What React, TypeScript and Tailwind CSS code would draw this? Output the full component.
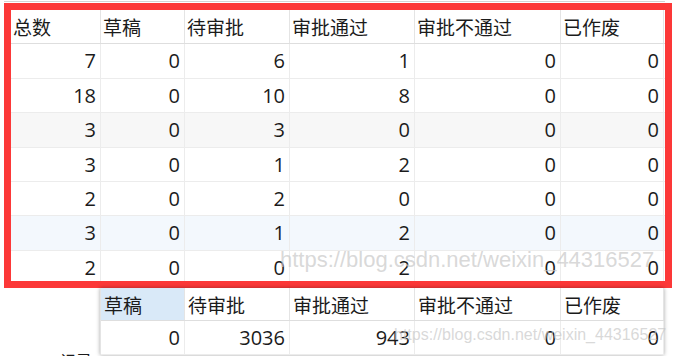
const cols = ["w-[90px]", "w-[84px]", "w-[105px]", "w-[125px]", "w-[146px]", "w-[103px]"];
const heads = ["总数", "草稿", "待审批", "审批通过", "审批不通过", "已作废"];
const rows = [
  { v: [7, 0, 6, 1, 0, 0], h: "h-[35px]", bg: "bg-white" },
  { v: [18, 0, 10, 8, 0, 0], h: "h-[34px]", bg: "bg-white" },
  { v: [3, 0, 3, 0, 0, 0], h: "h-[35px]", bg: "bg-[#f7f7f7]" },
  { v: [3, 0, 1, 2, 0, 0], h: "h-[34px]", bg: "bg-white" },
  { v: [2, 0, 2, 0, 0, 0], h: "h-[34px]", bg: "bg-white" },
  { v: [3, 0, 1, 2, 0, 0], h: "h-[35px]", bg: "bg-[#f3f8fd]" },
  { v: [2, 0, 0, 2, 0, 0], h: "h-[35px]", bg: "bg-white" },
];
const cjk = "font-['Noto_Sans_CJK_SC','Noto_Sans',sans-serif]";
const num = "font-['Open_Sans','Noto_Sans',sans-serif]";

export default function App() {
  return (
    <div className="relative w-[675px] h-[356px] overflow-hidden bg-white text-[#1b1b1b]">
      <div className="ml-[4px] mt-[1px] h-px w-[661px] bg-[#d4d4d4]" />
      <div className="ml-[4px] mt-[1px] w-[668px] h-[285px] border-[7px] border-[#fc3838] overflow-hidden">
        <div className="flex h-[34px] border-b border-[#dedede] bg-white">
          {heads.map((t, i) => (
            <div key={t} className={`${cols[i]} ${cjk} flex items-center border-r border-[#e4e4e4] pl-[2px] text-[19px] leading-none`}>
              {t}
            </div>
          ))}
        </div>
        {rows.map((r, ri) => (
          <div key={ri} className={`flex ${r.h} ${r.bg} border-b border-[#ececec]`}>
            {r.v.map((n, i) => (
              <div key={i} className={`${cols[i]} ${num} flex items-center justify-end border-r border-[#ececec] pr-[4px] text-[20px] leading-none`}>
                {n}
              </div>
            ))}
          </div>
        ))}
      </div>
      <div className="ml-[100px] w-[564px] shadow-[0_0_4px_rgba(0,0,0,0.35)] bg-white border-l border-[#e4e4e4]">
        <div className="flex h-[33px] border-b border-[#dedede]">
          {heads.slice(1).map((t, i) => (
            <div key={t} className={`${cols[i + 1]} ${cjk} ${i === 0 ? "bg-[#d9e9f8]" : "bg-white"} flex items-center border-r border-[#e4e4e4] pl-[3px] text-[19px] leading-none`}>
              {t}
            </div>
          ))}
        </div>
        <div className="flex h-[34px] border-b border-[#ececec]">
          {[0, 3036, 943, 0, 0].map((n, i) => (
            <div key={i} className={`${cols[i + 1]} ${num} flex items-center justify-end border-r border-[#ececec] pr-[4px] text-[20px] leading-none`}>
              {n}
            </div>
          ))}
        </div>
      </div>
      <div className={`absolute left-[44px] top-[352px] ${cjk} text-[16px] leading-none`}>一记录</div>
      <div className="pointer-events-none absolute left-[280px] top-[243px] font-['Liberation_Sans',sans-serif] text-[22px] text-[#c8c8c8]/70">
        https://blog.csdn.net/weixin_44316527
      </div>
      <div className="pointer-events-none absolute left-[394px] top-[323px] font-['Liberation_Sans',sans-serif] text-[16px] text-[#c8c8c8]/70">
        https://blog.csdn.net/weixin_44316527
      </div>
    </div>
  );
}
